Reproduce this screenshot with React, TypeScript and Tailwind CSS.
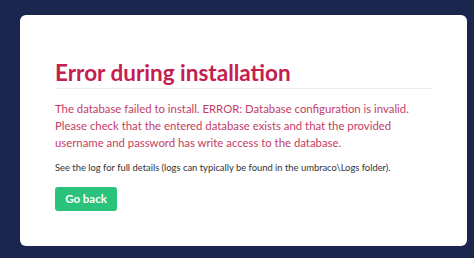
export default function App() {
  return (
    <div className="w-[474px] h-[258px] bg-[#1b264f] pt-[15px] pl-[20px] font-['Lato','Liberation_Sans',sans-serif]">
      <div className="w-[447px] h-[231px] bg-white rounded-[6px] pt-[44px] px-[35px]">
        <h1 className="text-[22.5px] leading-[27px] font-bold text-[#c4204f] pb-[2px] border-b border-[#eeeeee]">
          Error during installation
        </h1>
        <p className="mt-[11px] text-[11.35px] leading-[17px] text-[#c43d65]">
          The database failed to install. ERROR: Database configuration is invalid. Please check that the entered
          database exists and that the provided username and password has write access to the database.
        </p>
        <p className="mt-[10px] text-[9.4px] leading-[13px] text-[#333333]">
          See the log for full details (logs can typically be found in the umbraco\Logs folder).
        </p>
        <button className="mt-[13px] h-[24px] w-[62px] rounded-[3px] bg-[#2bc37c] text-white text-[11.5px] font-bold">
          Go back
        </button>
      </div>
    </div>
  );
}
